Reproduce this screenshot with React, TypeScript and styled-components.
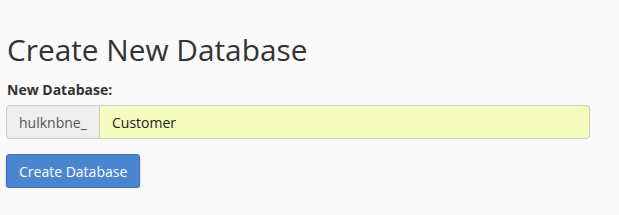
import React from "react";
import styled, { createGlobalStyle } from "styled-components";

const Global = createGlobalStyle`
  html, body { margin: 0; padding: 0; background: #fafafa; }
  body { font-family: "Open Sans", "Liberation Sans", sans-serif; color: #333; }
`;

const Page = styled.div`
  padding: 30px 29px 0 6px;
  width: 584px;
`;

const Title = styled.h1`
  margin: 0 0 10px 1px;
  font-size: 29.8px;
  font-weight: 400;
  line-height: 40px;
  color: #333;
`;

const Label = styled.label`
  display: block;
  margin: 0 0 5px 1px;
  font-size: 14px;
  font-weight: 700;
  line-height: 20px;
  color: #333;
`;

const Group = styled.div`
  display: flex;
  height: 34px;
  box-sizing: border-box;
`;

const Addon = styled.span`
  display: flex;
  align-items: center;
  box-sizing: border-box;
  width: 94px;
  padding: 0 12px;
  font-size: 14px;
  color: #555;
  background: #eee;
  border: 1px solid #ccc;
  border-radius: 4px 0 0 4px;
`;

const Input = styled.input`
  flex: 1;
  box-sizing: border-box;
  height: 34px;
  padding: 0 12px;
  font-family: inherit;
  font-size: 14px;
  color: #222;
  background: #f6fbbf;
  border: 1px solid #ccc;
  border-left: none;
  border-radius: 0 4px 4px 0;
  outline: none;
`;

const Button = styled.button`
  margin-top: 15px;
  height: 34px;
  padding: 0 12px;
  font-family: inherit;
  font-size: 14px;
  color: #fff;
  background: #4a86cf;
  border: 1px solid #3d74b9;
  border-radius: 3px;
  box-shadow: 0 2px 3px rgba(0, 0, 0, 0.2);
  cursor: pointer;
`;

export default function App() {
  return (
    <>
      <Global />
      <Page>
        <Title>Create New Database</Title>
        <Label htmlFor="db">New Database:</Label>
        <Group>
          <Addon>hulknbne_</Addon>
          <Input id="db" defaultValue="Customer" />
        </Group>
        <Button>Create Database</Button>
      </Page>
    </>
  );
}
